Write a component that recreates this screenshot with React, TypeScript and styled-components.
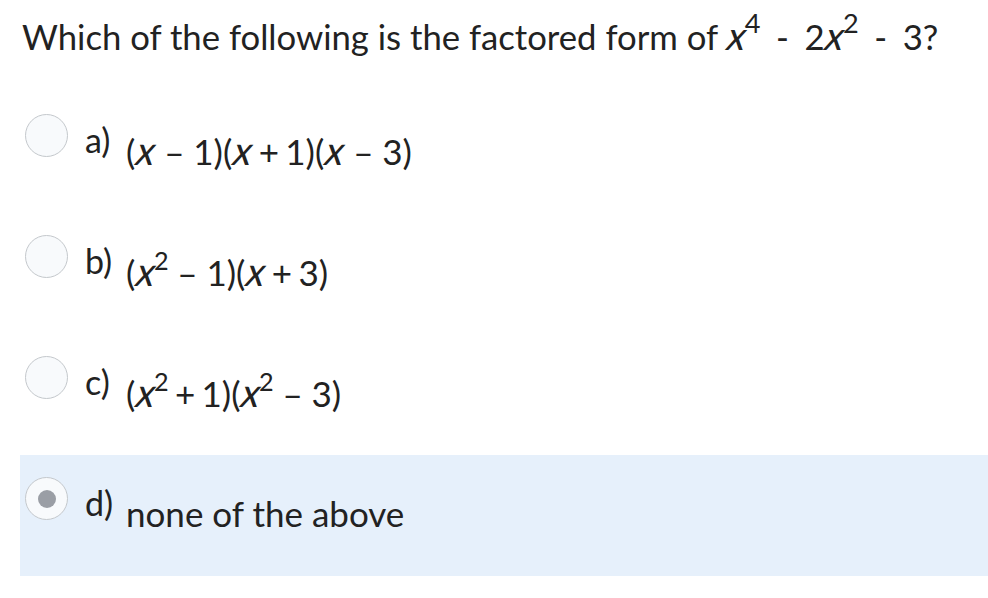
import React from "react";
import styled, { createGlobalStyle } from "styled-components";

const Global = createGlobalStyle`
  html, body { margin: 0; padding: 0; background: #ffffff; }
  body { font-family: Lato, "Open Sans", sans-serif; color: #222222; }
`;

const Page = styled.div`
  width: 988px;
  height: 598px;
  overflow: hidden;
  box-sizing: border-box;
  padding: 13px 0 0 20px;
`;

const Question = styled.div`
  font-size: 34.7px;
  line-height: 44px;
  height: 44px;
  padding-left: 2px;
  margin-bottom: 35px;
  white-space: nowrap;
`;

const Var = styled.i`
  font-style: italic;
  font-size: 1.14em;
  display: inline-block;
  margin-left: 0.04em;
  transform: skewX(-8deg);
`;

const Sup = styled.sup<{ $scale?: number }>`
  font-size: ${(p) => p.$scale ?? 0.72}em;
  vertical-align: 0;
  position: relative;
  top: -0.62em;
  margin-left: -0.06em;
  line-height: 0;
`;

const Op = styled.span<{ $space: number }>`
  display: inline-block;
  margin: 0 ${(p) => p.$space}em;
`;

const Options = styled.div`
  display: flex;
  flex-direction: column;
`;

const Row = styled.div<{ $selected?: boolean }>`
  display: flex;
  align-items: flex-start;
  height: 121px;
  box-sizing: border-box;
  padding: 22px 0 0 5px;
  margin-right: -20px;
  background: ${(p) => (p.$selected ? "#e6f0fb" : "transparent")};
`;

const Radio = styled.span<{ $checked?: boolean }>`
  flex: none;
  width: 43px;
  height: 43px;
  box-sizing: border-box;
  border-radius: 50%;
  border: 1px solid #c4c8cc;
  background: #f8fafc;
  display: flex;
  align-items: center;
  justify-content: center;
  &::after {
    content: "";
    display: ${(p) => (p.$checked ? "block" : "none")};
    width: 18px;
    height: 18px;
    border-radius: 50%;
    background: #9a9ea5;
  }
`;

const Letter = styled.span`
  display: block;
  font-size: 34px;
  line-height: 40px;
  height: 40px;
  margin: 6px 0 0 17px;
  width: 41px;
  flex: none;
`;

const Answer = styled.span<{ $size: number }>`
  display: block;
  font-size: ${(p) => p.$size}px;
  line-height: 40px;
  height: 40px;
  margin-top: 16px;
  white-space: nowrap;
`;

const X = () => <Var>x</Var>;

export default function App() {
  return (
    <>
      <Global />
      <Page>
        <Question>
          Which of the following is the factored form of <X />
          <Sup $scale={0.78}>4</Sup>
          <Op $space={0.45}>-</Op>2<X />
          <Sup $scale={0.78}>2</Sup>
          <Op $space={0.45}>-</Op>3?
        </Question>
        <Options>
          <Row>
            <Radio />
            <Letter>a)</Letter>
            <Answer $size={35}>
              (<X />
              <Op $space={0.25}>–</Op>1)(<X />
              <Op $space={0.18}>+</Op>1)(<X />
              <Op $space={0.25}>–</Op>3)
            </Answer>
          </Row>
          <Row>
            <Radio />
            <Letter>b)</Letter>
            <Answer $size={35}>
              (<X />
              <Sup>2</Sup>
              <Op $space={0.25}>–</Op>1)(<X />
              <Op $space={0.18}>+</Op>3)
            </Answer>
          </Row>
          <Row>
            <Radio />
            <Letter>c)</Letter>
            <Answer $size={35}>
              (<X />
              <Sup>2</Sup>
              <Op $space={0.18}>+</Op>1)(<X />
              <Sup>2</Sup>
              <Op $space={0.25}>–</Op>3)
            </Answer>
          </Row>
          <Row $selected>
            <Radio $checked />
            <Letter>d)</Letter>
            <Answer $size={35}>none of the above</Answer>
          </Row>
        </Options>
      </Page>
    </>
  );
}
